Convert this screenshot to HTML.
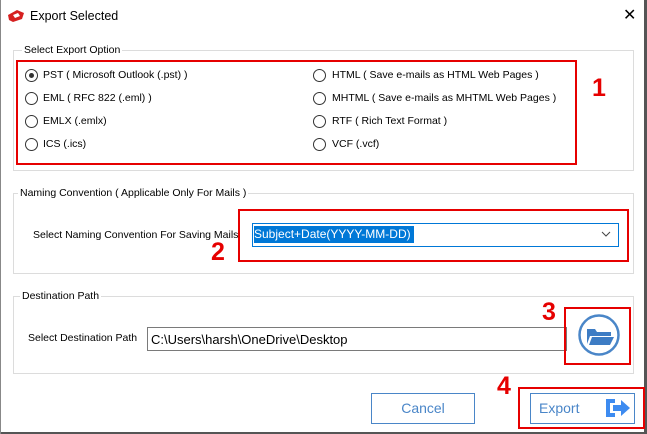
<!DOCTYPE html>
<html><head><meta charset="utf-8"><style>
*{box-sizing:border-box;margin:0;padding:0}
body{width:647px;height:434px;background:#fff;font-family:"Liberation Sans",sans-serif;font-size:10.5px;color:#000;position:relative;overflow:hidden}
.a{position:absolute}
.grp{position:absolute;border:1px solid #dcdcdc}
.lg{position:absolute;background:#fff;padding:0 2px;font-size:10.5px;color:#000}
.red{position:absolute;border:2px solid #e60000}
.num{position:absolute;color:#e60000;font-weight:bold;font-size:25px}
.rad{position:absolute;width:13px;height:13px;border:1px solid #333;border-radius:50%;background:#fff}
.rl{position:absolute;font-size:10.5px}
</style></head><body>
<div class="a" style="right:0;top:0;width:3px;height:434px;background:#555"></div>
<div class="a" style="left:0;bottom:0;width:647px;height:2px;background:#555"></div>
<div class="a" style="left:0;top:0;width:1px;height:434px;background:#888"></div>
<svg class="a" style="left:7px;top:9px" width="18" height="14" viewBox="0 0 18 14"><path d="M1 6 L10 1 L17 4 L15 10 L6 13 L2 11 Z" fill="#d62020"/><path d="M6 6 L11 4 L13 7 L8 9 Z" fill="#fff"/></svg>
<div class="a" style="left:30px;top:9px;font-size:12.5px">Export Selected</div>
<div class="a" style="left:623px;top:5px;font-size:16px">✕</div>

<div class="grp" style="left:13px;top:50px;width:621px;height:121px"></div>
<div class="lg" style="left:22px;top:44px">Select Export Option</div>
<div class="red" style="left:16px;top:60px;width:561px;height:105px"></div>
<div class="num" style="left:592px;top:74px">1</div>
<div class="rad" style="left:25px;top:69px"></div><div class="a" style="left:29px;top:73px;width:5px;height:5px;border-radius:50%;background:#333"></div>
<div class="rl" style="left:43px;top:69px">PST ( Microsoft Outlook (.pst) )</div>
<div class="rad" style="left:25px;top:92px"></div><div class="rl" style="left:43px;top:92px">EML ( RFC 822 (.eml) )</div>
<div class="rad" style="left:25px;top:115px"></div><div class="rl" style="left:43px;top:115px">EMLX (.emlx)</div>
<div class="rad" style="left:25px;top:138px"></div><div class="rl" style="left:43px;top:138px">ICS (.ics)</div>
<div class="rad" style="left:313px;top:69px"></div><div class="rl" style="left:332px;top:69px">HTML ( Save e-mails as HTML Web Pages )</div>
<div class="rad" style="left:313px;top:92px"></div><div class="rl" style="left:332px;top:92px">MHTML ( Save e-mails as MHTML Web Pages )</div>
<div class="rad" style="left:313px;top:115px"></div><div class="rl" style="left:332px;top:115px">RTF ( Rich Text Format )</div>
<div class="rad" style="left:313px;top:138px"></div><div class="rl" style="left:332px;top:138px">VCF (.vcf)</div>

<div class="grp" style="left:13px;top:193px;width:621px;height:81px"></div>
<div class="lg" style="left:18px;top:187px">Naming Convention ( Applicable Only For Mails )</div>
<div class="rl" style="left:33px;top:229px">Select Naming Convention For Saving Mails</div>
<div class="red" style="left:238px;top:209px;width:391px;height:53px"></div>
<div class="a" style="left:252px;top:223px;width:367px;height:24px;border:1px solid #0078d7;background:#fff"></div>
<div class="a" style="left:254px;top:226px;width:160px;height:17px;background:#0078d7;color:#fff;font-size:12px;line-height:17px;white-space:nowrap">Subject+Date(YYYY-MM-DD)</div>
<svg class="a" style="left:601px;top:231px" width="10" height="7"><path d="M1 1 L5 5 L9 1" stroke="#444" fill="none"/></svg>
<div class="num" style="left:211px;top:238px">2</div>

<div class="grp" style="left:13px;top:296px;width:621px;height:78px"></div>
<div class="lg" style="left:20px;top:290px">Destination Path</div>
<div class="rl" style="left:28px;top:332px">Select Destination Path</div>
<div class="a" style="left:147px;top:327px;width:420px;height:24px;border:1px solid #7a7a7a;font-size:13px;padding:4px 3px;white-space:nowrap">C:\Users\harsh\OneDrive\Desktop</div>
<div class="red" style="left:564px;top:307px;width:67px;height:58px"></div>
<div class="num" style="left:542px;top:298px">3</div>
<svg class="a" style="left:577px;top:313px" width="44" height="44" viewBox="0 0 44 44"><circle cx="22" cy="22" r="19.5" fill="none" stroke="#4a86c8" stroke-width="2.5"/><path d="M10 16 L10 31 L13 23 L34 23 L34 19 L20 19 L18 16 Z" fill="#3d7cc4"/><path d="M12 32 L15 24 L37 24 L33 32 Z" fill="#3d7cc4"/></svg>

<div class="a" style="left:371px;top:393px;width:104px;height:31px;border:1px solid #4a86c8;color:#4a86c8;font-size:14px;text-align:center;line-height:29px">Cancel</div>
<div class="red" style="left:518px;top:387px;width:127px;height:42px"></div>
<div class="num" style="left:497px;top:372px">4</div>
<div class="a" style="left:530px;top:393px;width:105px;height:31px;border:1px solid #4a86c8;color:#4a86c8;font-size:14px;line-height:29px;padding-left:8px">Export</div>
<svg class="a" style="left:605px;top:398px" width="26" height="20"><path d="M1 1 H10 V5 H5 V15 H10 V19 H1 Z" fill="#3d8bf0"/><path d="M8 7 H16 V2 L25 10 L16 18 V13 H8 Z" fill="#3d8bf0"/></svg>
</body></html>
